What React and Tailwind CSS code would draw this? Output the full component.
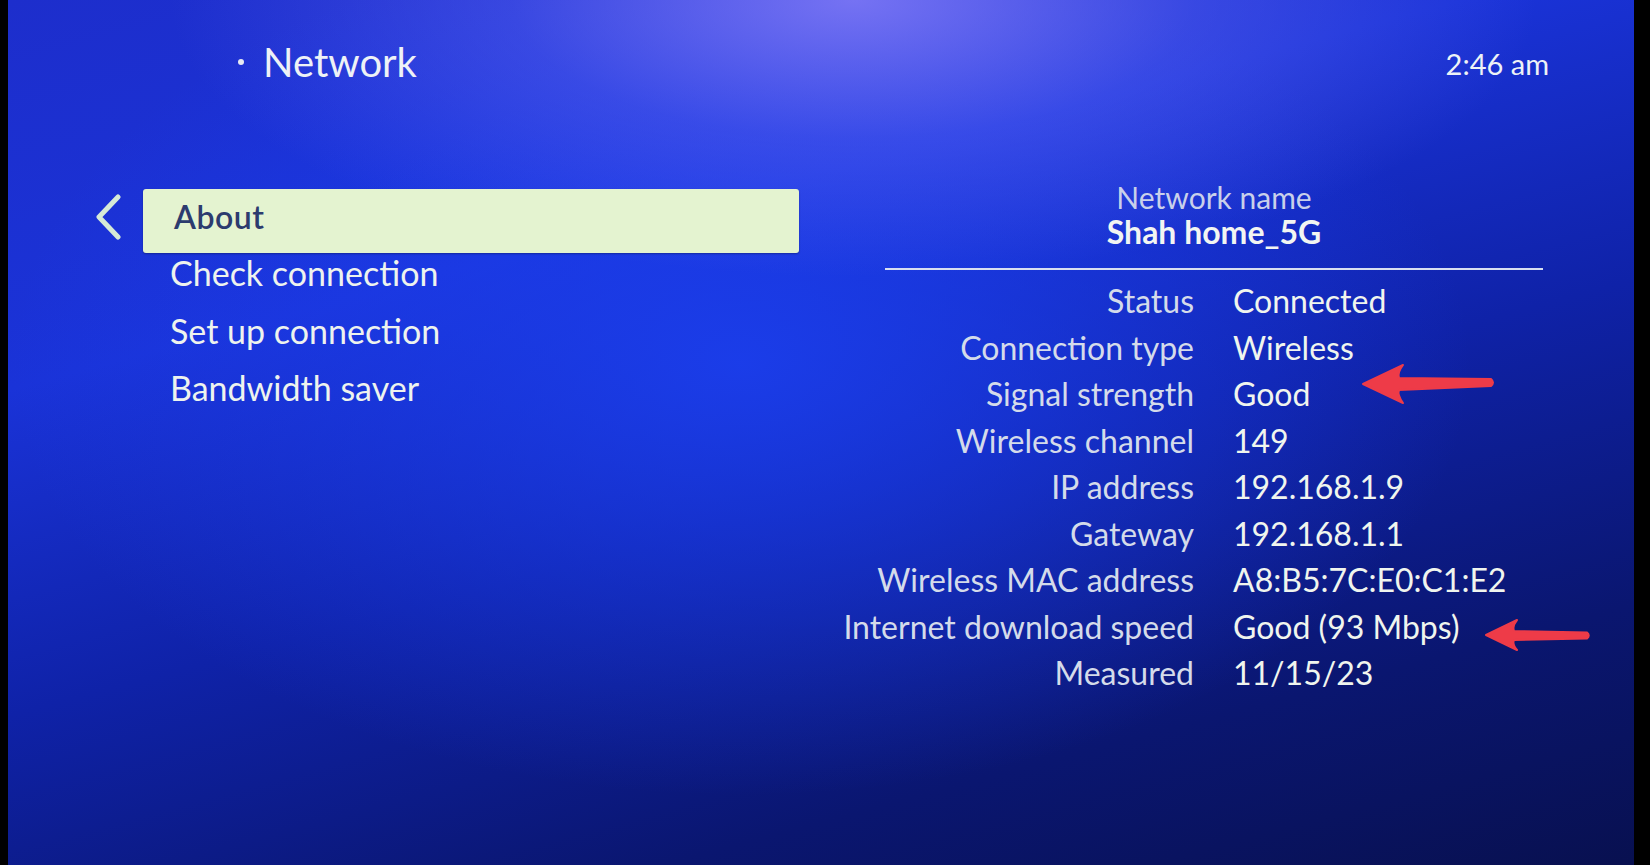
const menu = ['Check connection', 'Set up connection', 'Bandwidth saver'];

const details = [
  ['Status', 'Connected'],
  ['Connection type', 'Wireless'],
  ['Signal strength', 'Good'],
  ['Wireless channel', '149'],
  ['IP address', '192.168.1.9'],
  ['Gateway', '192.168.1.1'],
  ['Wireless MAC address', 'A8:B5:7C:E0:C1:E2'],
  ['Internet download speed', 'Good (93 Mbps)'],
  ['Measured', '11/15/23'],
];

function Arrow({ className, width, height, d }) {
  return (
    <svg className={className} width={width} height={height} viewBox={`0 0 ${width} ${height}`}>
      <path d={d} fill="#ee3b48" stroke="#ee3b48" strokeWidth="2" strokeLinejoin="round" />
    </svg>
  );
}

export default function App() {
  return (
    <div className="relative flex h-[865px] w-[1650px] overflow-hidden bg-black font-['Lato',sans-serif]">
      <div className="w-[8px] shrink-0 bg-black" />

      <main className="relative flex w-[1626px] shrink-0 flex-col px-[85px] bg-[radial-gradient(ellipse_42%_32%_at_52%_0%,rgba(140,130,250,0.8)_0%,rgba(100,105,245,0.4)_50%,transparent_100%),radial-gradient(ellipse_45%_50%_at_45%_42%,rgba(28,64,240,0.85)_0%,transparent_100%),linear-gradient(165deg,#1d2ecc_0%,#1a33d8_30%,#0f22a8_55%,#0a1670_80%,#081050_100%)]">
        {/* header */}
        <header className="flex h-[184px] shrink-0 items-start justify-between pt-[40px]">
          <div className="ml-[145px] flex items-center gap-[19px] text-[#eef2f6]">
            <span className="h-[6px] w-[6px] rounded-full bg-[#e6eaf2]" />
            <span className="text-[40px] leading-[44px]">Network</span>
          </div>
          <span className="mt-[2px] text-[29px] leading-[44px] text-[#eef2f6]">2:46 am</span>
        </header>

        <div className="flex">
          {/* left menu */}
          <div className="mt-[5px] w-[706px] shrink-0">
            <div className="flex items-center gap-[20px]">
              <svg width="30" height="46" viewBox="0 0 30 46" className="-mt-[8px] shrink-0">
                <path d="M25 3 L6 23 L25 43" fill="none" stroke="#d6ead6" strokeWidth="5" strokeLinecap="round" strokeLinejoin="round" />
              </svg>
              <div className="flex h-[64px] w-[656px] items-center rounded-[3px] bg-[#e4f3d0] pl-[31px] shadow-[0_1px_2px_rgba(0,0,0,0.3)]">
                <span className="-mt-[8px] text-[32px] font-semibold tracking-[0.5px] text-[#2c3b6e]">About</span>
              </div>
            </div>
            <ul className="-mt-[9px] pl-[77px]">
              {menu.map((item) => (
                <li key={item} className="text-[34px] leading-[57.5px] text-[#eef3ee]">
                  {item}
                </li>
              ))}
            </ul>
          </div>

          {/* right details */}
          <section className="ml-[86px] w-[658px] shrink-0">
            <div className="-mt-[2px] text-center text-[30px] leading-[30px] text-[#c9d0ea]">Network name</div>
            <div className="mt-[3px] text-center text-[32px] font-bold leading-[34px] text-[#f2f5f2]">Shah home_5G</div>
            <div className="mt-[19px] h-[2px] bg-[#d8dff0]" />
            <div className="mt-[8px]">
              {details.map(([label, value]) => (
                <div key={label} className="flex h-[46.5px] items-center text-[32px]">
                  <div className="flex w-[309px] shrink-0 justify-end whitespace-nowrap text-[#d4dbea]">{label}</div>
                  <div className="ml-[39px] whitespace-nowrap text-[#f0f5ee]">{value}</div>
                </div>
              ))}
            </div>
          </section>
        </div>
      </main>

      <div className="w-[16px] shrink-0 bg-black" />

      <Arrow
        className="absolute left-[1360px] top-[362px]"
        width={136}
        height={44}
        d="M3 22 L43 3 Q37 11 39 16 L131 17 Q135 20.5 131 24 L39 28 Q37 33 43 41 Z"
      />
      <Arrow
        className="absolute left-[1482px] top-[617px]"
        width={110}
        height={36}
        d="M4 18 L35 3 Q30 9 32 14 L105 15.5 Q108.5 18.5 105 21.5 L32 23 Q30 27 35 33 Z"
      />
    </div>
  );
}
